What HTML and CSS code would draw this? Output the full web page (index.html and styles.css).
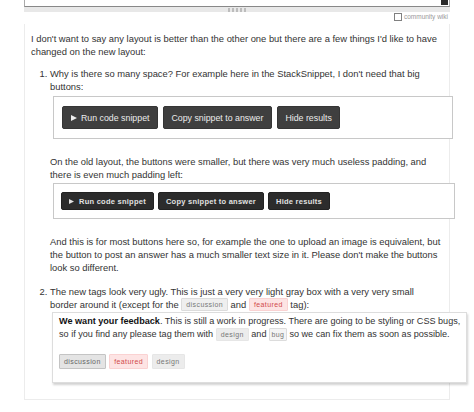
FILE: index.html
```html
<!DOCTYPE html>
<html>
<head>
<meta charset="utf-8">
<link rel="stylesheet" href="styles.css">
</head>
<body>
<div class="editor">
  <div class="textarea"><span class="thumb"></span></div>
  <div class="grip"><span class="dots"></span></div>
  <div class="wiki"><span class="cb"></span><span>community wiki</span></div>
  <div class="preview">
    <p class="intro">I don't want to say any layout is better than the other one but there are a few things I'd like to have<br>changed on the new layout:</p>
    <ol>
      <li>
        <p>Why is there so many space? For example here in the StackSnippet, I don't need that big<br>buttons:</p>
        <div class="snippet new">
          <button class="btn"><svg class="play" viewBox="0 0 6 6"><path d="M0 0L6 3L0 6Z" fill="currentColor"/></svg>Run code snippet</button>
          <button class="btn">Copy snippet to answer</button>
          <button class="btn">Hide results</button>
        </div>
        <p>On the old layout, the buttons were smaller, but there was very much useless padding, and<br>there is even much padding left:</p>
        <div class="snippet old">
          <button class="btn"><svg class="play" viewBox="0 0 6 6"><path d="M0 0L6 3L0 6Z" fill="currentColor"/></svg>Run code snippet</button>
          <button class="btn">Copy snippet to answer</button>
          <button class="btn">Hide results</button>
        </div>
        <p>And this is for most buttons here so, for example the one to upload an image is equivalent, but<br>the button to post an answer has a much smaller text size in it. Please don't make the buttons<br>look so different.</p>
      </li>
      <li>
        <p>The new tags look very ugly. This is just a very very light gray box with a very very small<br>border around it (except for the <span class="tag discussion">discussion</span> and <span class="tag featured">featured</span> tag):</p>
        <div class="feedback">
          <p><b>We want your feedback</b>. This is still a work in progress. There are going to be styling or CSS bugs,<br>so if you find any please tag them with <span class="tag design">design</span> and <span class="tag bug">bug</span> so we can fix them as soon as possible.</p>
          <div class="tags">
            <span class="tag discussion">discussion</span>
            <span class="tag featured">featured</span>
            <span class="tag design">design</span>
          </div>
        </div>
      </li>
    </ol>
  </div>
</div>
</body>
</html>
```

FILE: styles.css
```css
* { box-sizing: border-box; }

body {
  margin: 0;
  background: #fff;
  font-family: "Liberation Sans", Arial, sans-serif;
  color: #333;
}

.editor {
  width: 426px;
  margin-left: 24px;
}

.textarea {
  height: 7px;
  border: 1px solid #aaa;
  border-top: 0;
  border-bottom-color: #888;
  display: flex;
  justify-content: flex-end;
  padding-right: 1px;
}

.thumb {
  width: 7px;
  height: 5px;
  background: #2a2a2a;
}

.grip {
  height: 5px;
  background: #e8e8e8;
  display: flex;
  justify-content: center;
  align-items: center;
}

.dots {
  width: 20px;
  height: 4px;
  background-image: radial-gradient(circle, #999 0.55px, transparent 0.9px);
  background-size: 4px 2px;
}

.wiki {
  height: 12px;
  display: flex;
  justify-content: flex-end;
  align-items: flex-start;
  gap: 2px;
  padding-top: 1px;
  padding-right: 2px;
  font-size: 6.5px;
  line-height: 8px;
  color: #999;
}

.cb {
  width: 8px;
  height: 8px;
  border: 1px solid #808080;
  background: #fff;
}

.preview {
  border: 1px solid #ececec;
  border-top: 0;
  padding: 8px 0 16px 6px;
  font-size: 9.4px;
  line-height: 13px;
}

p {
  margin: 0;
  white-space: nowrap;
}

.intro { margin-bottom: 8.5px; }

ol {
  margin: 0;
  padding-left: 19px;
}

li + li { margin-top: 11px; }

.snippet {
  margin-left: 3px;
  border: 1px solid #c8c8c8;
  display: flex;
  background: #fff;
}

.snippet.new {
  width: 400px;
  margin-top: 3.5px;
  margin-bottom: 16px;
  padding: 9px 8px;
  gap: 5px;
}

.snippet.old {
  width: 402px;
  margin-top: 2px;
  margin-bottom: 15.5px;
  padding: 8px 7px;
  gap: 4px;
}

.btn {
  display: flex;
  align-items: center;
  margin: 0;
  font-family: inherit;
  white-space: nowrap;
  border-radius: 2px;
  cursor: pointer;
}

.new .btn {
  height: 23px;
  padding: 0 7.5px;
  font-size: 8.8px;
  background: #3f3f3f;
  border: 1px solid #353535;
  color: #ececec;
}

.old .btn {
  height: 18px;
  padding: 0 7px;
  font-size: 7.5px;
  font-weight: bold;
  letter-spacing: 0.25px;
  background: #2c2c2c;
  border: 1px solid #222;
  color: #e2e2e2;
}

.play {
  width: 6px;
  height: 6px;
  margin-right: 4.5px;
}

.old .play {
  width: 5px;
  height: 5px;
  margin-right: 5px;
}

.tag {
  display: inline-block;
  vertical-align: top;
  font-size: 7px;
  letter-spacing: 0.4px;
  line-height: 11px;
  padding: 0 4px;
  border: 1px solid #dcdcdc;
  background: #efefef;
  color: #777;
  border-radius: 1px;
}

.tag.featured {
  background: #fde4e4;
  border-color: #fad2d2;
  color: #d14b4b;
}

.tag.design {
  background: #ececec;
  border-color: #e6e6e6;
}

.tag.bug {
  padding: 0 1.5px;
  background: #f4f4f4;
}

.feedback {
  width: 415px;
  margin: 1px 0 0 2px;
  padding: 2px 3px 13px 6px;
  border: 1px solid #ddd;
  background: #fff;
  box-shadow: 1px 2px 2px rgba(0, 0, 0, 0.18);
  font-size: 9.1px;
}

.feedback b { color: #111; }

.tags {
  display: flex;
  gap: 3.5px;
  margin-top: 13px;
}

.tags .tag {
  line-height: 13.6px;
}

.tags .tag.discussion {
  background: #e4e4e4;
  border-color: #c4c4c4;
  color: #666;
}
```
